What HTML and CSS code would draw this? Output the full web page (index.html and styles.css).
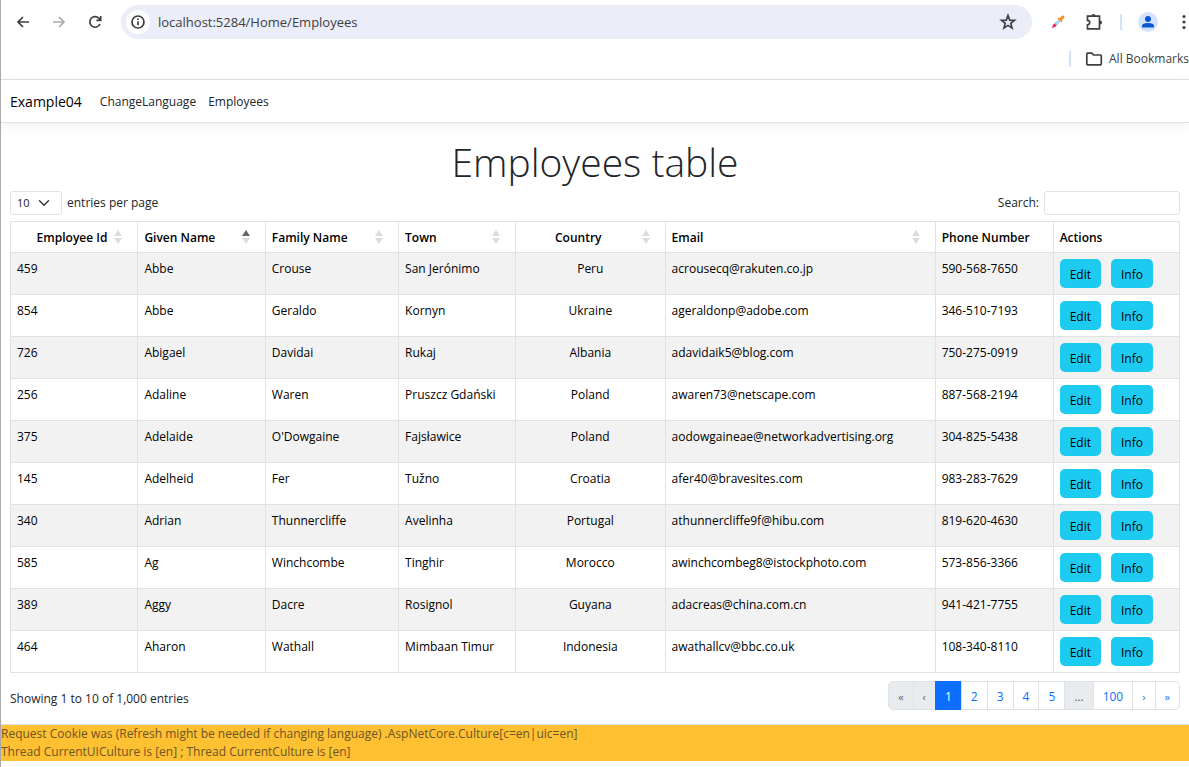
FILE: index.html
```html
<!DOCTYPE html>
<html lang="en">
  <head>
    <meta charset="UTF-8" />
    <meta name="viewport" content="width=device-width, initial-scale=1.0" />
    <title>Employees - Example04</title>
    <link rel="stylesheet" href="styles.css">
  </head>
  <body>
    <div class="browser">
      <div class="toolbar">
        <button class="icon-btn" aria-label="Back">
          <svg width="16" height="16" viewBox="0 0 16 16"><path d="M14 8H3M8 3L3 8l5 5" /></svg>
        </button>
        <button class="icon-btn faded" aria-label="Forward">
          <svg width="16" height="16" viewBox="0 0 16 16"><path d="M2 8h11M8 3l5 5-5 5" /></svg>
        </button>
        <button class="icon-btn" aria-label="Reload">
          <svg width="16" height="16" viewBox="0 0 16 16"><path d="M13 10a5.300 5.300 0 1 1-.6-5.200L13.500 6M13.700 2v4.300H9.400" /></svg>
        </button>
        <div class="address">
          <span class="site-info">
            <svg width="16" height="16" viewBox="0 0 16 16"><circle cx="8" cy="8" r="6" /><path d="M8 7.300v4M8 4.500v1.600" /></svg>
          </span>
          <input type="text" class="url" aria-label="Address" value="localhost:5284/Home/Employees" />
          <button class="icon-btn" aria-label="Bookmark this page">
            <svg width="18" height="18" viewBox="0 0 18 18"><path d="M9 2.500l1.700 4.600 4.900.2-3.800 3.100 1.300 4.700L9 12.400l-4.100 2.700 1.300-4.700-3.800-3.100 4.900-.2z" /></svg>
          </button>
        </div>
        <div class="extensions">
          <button class="icon-btn" aria-label="Color picker">
            <svg class="picker" width="16" height="16" viewBox="0 0 16 16">
              <path class="picker-tip" d="M2 14l1-3 3-3 2 2-3 3z" />
              <path class="picker-tube" d="M4.500 9.500l4-4 2 2-4 4z" />
              <path class="picker-bulb" d="M7.500 4.500l1-1 1 .8 2.500-2.500q1.500-.8 2.200.2.600 1-.2 2l-2.400 2.500.8 1-1 1z" />
            </svg>
          </button>
          <button class="icon-btn" aria-label="Extensions">
            <svg width="18" height="18" viewBox="0 0 18 18"><path d="M2.500 3.200h12v12.600h-12v-4a2.200 2.200 0 0 0 0-4.400z" /><path class="solid" d="M6.500 3a2 2 0 0 1 4 0zM15 7.500a2 2 0 0 1 0 4z" /></svg>
          </button>
          <span class="divider"></span>
          <button class="icon-btn" aria-label="Profile">
            <svg class="profile" width="20" height="20" viewBox="0 0 20 20">
              <circle class="profile-bg" cx="10" cy="10" r="10" />
              <circle cx="10" cy="7" r="3" />
              <path d="M4 15.500v-1.500q0-3 6-3t6 3v1.500z" />
            </svg>
          </button>
          <button class="icon-btn menu-btn" aria-label="Menu">
            <svg class="dots" width="4" height="16" viewBox="0 0 4 16"><circle cx="2" cy="2.500" r="1.600" /><circle cx="2" cy="8" r="1.600" /><circle cx="2" cy="13.500" r="1.600" /></svg>
          </button>
        </div>
      </div>
      <div class="bookmarks">
        <span class="divider"></span>
        <button class="all-bookmarks">
          <svg width="18" height="16" viewBox="0 0 18 16"><path d="M1.800 13V3q0-.8.800-.8h4.200l1.700 1.800h7q.8 0 .8.800V13q0 .8-.8.800H2.600q-.8 0-.8-.8z" /></svg>
          All Bookmarks
        </button>
      </div>
    </div>

    <nav class="navbar">
      <a class="brand" href="#">Example04</a>
      <a href="#">ChangeLanguage</a>
      <a href="#">Employees</a>
    </nav>

    <main class="container">
      <h1>Employees table</h1>

      <div class="controls">
        <div class="length">
          <select id="entries">
            <option>10</option>
            <option>25</option>
            <option>50</option>
            <option>100</option>
          </select>
          <label for="entries">entries per page</label>
        </div>
        <div class="search">
          <label for="search">Search:</label>
          <input type="search" id="search" />
        </div>
      </div>

      <table>
        <colgroup>
          <col class="col-id" />
          <col class="col-given" />
          <col class="col-family" />
          <col class="col-town" />
          <col class="col-country" />
          <col class="col-email" />
          <col class="col-phone" />
          <col class="col-actions" />
        </colgroup>
        <thead>
          <tr>
            <th class="sortable right">Employee Id</th>
            <th class="sortable asc">Given Name</th>
            <th class="sortable">Family Name</th>
            <th class="sortable">Town</th>
            <th class="sortable center">Country</th>
            <th class="sortable">Email</th>
            <th>Phone Number</th>
            <th>Actions</th>
          </tr>
        </thead>
        <tbody>
          <tr>
            <td>459</td><td>Abbe</td><td>Crouse</td><td>San Jerónimo</td><td class="center">Peru</td>
            <td>acrousecq@rakuten.co.jp</td><td>590-568-7650</td>
            <td><div class="actions"><button>Edit</button><button>Info</button></div></td>
          </tr>
          <tr>
            <td>854</td><td>Abbe</td><td>Geraldo</td><td>Kornyn</td><td class="center">Ukraine</td>
            <td>ageraldonp@adobe.com</td><td>346-510-7193</td>
            <td><div class="actions"><button>Edit</button><button>Info</button></div></td>
          </tr>
          <tr>
            <td>726</td><td>Abigael</td><td>Davidai</td><td>Rukaj</td><td class="center">Albania</td>
            <td>adavidaik5@blog.com</td><td>750-275-0919</td>
            <td><div class="actions"><button>Edit</button><button>Info</button></div></td>
          </tr>
          <tr>
            <td>256</td><td>Adaline</td><td>Waren</td><td>Pruszcz Gdański</td><td class="center">Poland</td>
            <td>awaren73@netscape.com</td><td>887-568-2194</td>
            <td><div class="actions"><button>Edit</button><button>Info</button></div></td>
          </tr>
          <tr>
            <td>375</td><td>Adelaide</td><td>O'Dowgaine</td><td>Fajsławice</td><td class="center">Poland</td>
            <td>aodowgaineae@networkadvertising.org</td><td>304-825-5438</td>
            <td><div class="actions"><button>Edit</button><button>Info</button></div></td>
          </tr>
          <tr>
            <td>145</td><td>Adelheid</td><td>Fer</td><td>Tužno</td><td class="center">Croatia</td>
            <td>afer40@bravesites.com</td><td>983-283-7629</td>
            <td><div class="actions"><button>Edit</button><button>Info</button></div></td>
          </tr>
          <tr>
            <td>340</td><td>Adrian</td><td>Thunnercliffe</td><td>Avelinha</td><td class="center">Portugal</td>
            <td>athunnercliffe9f@hibu.com</td><td>819-620-4630</td>
            <td><div class="actions"><button>Edit</button><button>Info</button></div></td>
          </tr>
          <tr>
            <td>585</td><td>Ag</td><td>Winchcombe</td><td>Tinghir</td><td class="center">Morocco</td>
            <td>awinchcombeg8@istockphoto.com</td><td>573-856-3366</td>
            <td><div class="actions"><button>Edit</button><button>Info</button></div></td>
          </tr>
          <tr>
            <td>389</td><td>Aggy</td><td>Dacre</td><td>Rosignol</td><td class="center">Guyana</td>
            <td>adacreas@china.com.cn</td><td>941-421-7755</td>
            <td><div class="actions"><button>Edit</button><button>Info</button></div></td>
          </tr>
          <tr>
            <td>464</td><td>Aharon</td><td>Wathall</td><td>Mimbaan Timur</td><td class="center">Indonesia</td>
            <td>awathallcv@bbc.co.uk</td><td>108-340-8110</td>
            <td><div class="actions"><button>Edit</button><button>Info</button></div></td>
          </tr>
        </tbody>
      </table>

      <div class="table-footer">
        <p>Showing 1 to 10 of 1,000 entries</p>
        <div class="pagination">
          <button class="arrow" disabled>«</button>
          <button class="arrow" disabled>‹</button>
          <button class="active">1</button>
          <button>2</button>
          <button>3</button>
          <button>4</button>
          <button>5</button>
          <button disabled>…</button>
          <button>100</button>
          <button class="arrow">›</button>
          <button class="arrow">»</button>
        </div>
      </div>
    </main>

    <footer>
      <p>Request Cookie was (Refresh might be needed if changing language) .AspNetCore.Culture[c=en|uic=en]</p>
      <p>Thread CurrentUICulture is [en] ; Thread CurrentCulture is [en]</p>
    </footer>
  </body>
</html>
```
FILE: styles.css
```css
* {
  margin: 0;
  padding: 0;
  box-sizing: border-box;
}
body {
  font-family: "Open Sans", "Noto Sans", sans-serif;
  font-size: 12px;
  line-height: 18px;
  color: #212529;
  background: white;
  border-left: 1px solid #a9a9ac;
  min-height: 100vh;
  overflow-x: hidden;
}
button,
input,
select {
  font: inherit;
  color: inherit;
}
button {
  cursor: pointer;
}
a {
  color: inherit;
  text-decoration: none;
}

/* browser bar */
.browser {
  border-bottom: 1px solid #dfe0e1;
}
.toolbar {
  display: flex;
  align-items: center;
  height: 44px;
  padding-left: 12px;
}
.icon-btn {
  display: flex;
  align-items: center;
  justify-content: center;
  width: 20px;
  height: 20px;
  margin-right: 16px;
  border: none;
  background: none;
}
svg {
  fill: none;
  stroke: #3c4043;
  stroke-width: 1.7;
  flex-shrink: 0;
}
.solid {
  fill: #3c4043;
  stroke: none;
}
.faded svg {
  stroke: #a8aaac;
}
.address {
  display: flex;
  align-items: center;
  flex: 1;
  height: 34px;
  padding-left: 5px;
  border-radius: 17px;
  background: #ebeef8;
}
.address .icon-btn {
  margin-right: 14px;
}
.site-info {
  display: flex;
  align-items: center;
  justify-content: center;
  width: 24px;
  height: 24px;
  border-radius: 50%;
  background: white;
}
.url {
  flex: 1;
  padding: 0 8px;
  border: none;
  outline: none;
  background: none;
  font-size: 13px;
  color: #3c4043;
}
.extensions {
  display: flex;
  align-items: center;
  padding-left: 16px;
}
.divider {
  width: 2px;
  height: 16px;
  background: #d3e3fd;
}
.extensions .divider {
  margin-right: 16px;
}
.picker {
  stroke: none;
}
.picker-tip {
  fill: #e91e63;
}
.picker-tube {
  fill: #a9d3fb;
}
.picker-bulb {
  fill: #fb8c1e;
}
.profile {
  fill: #0b57d0;
  stroke: none;
}
.profile-bg {
  fill: #d3e3fd;
}
.dots {
  fill: #3c4043;
  stroke: none;
}
.extensions .menu-btn {
  width: 10px;
  margin: 0 0 0 5px;
}
.bookmarks {
  display: flex;
  align-items: center;
  justify-content: flex-end;
  height: 35px;
  padding-bottom: 5px;
}
.all-bookmarks {
  display: flex;
  align-items: center;
  gap: 6px;
  margin-left: 14px;
  border: none;
  background: none;
  color: #3c4043;
  white-space: nowrap;
}

/* page */
.navbar {
  display: flex;
  align-items: center;
  gap: 12px;
  height: 43px;
  padding: 2px 9px 0;
  border-bottom: 1px solid #dee2e6;
  box-shadow: 0 4px 12px rgba(0, 0, 0, 0.05);
}
.brand {
  margin-right: 6px;
  font-size: 14px;
  color: black;
}
.container {
  padding: 15px 9px 14px;
}
h1 {
  font-size: 39px;
  font-weight: 300;
  line-height: 48px;
  text-align: center;
}
.controls {
  display: flex;
  justify-content: space-between;
  padding: 5px 0 6px;
}
.length,
.search {
  display: flex;
  align-items: center;
  gap: 5px;
}
select,
.search input {
  height: 24px;
  border: 1px solid #dee2e6;
  border-radius: 3px;
  background: white;
}
select {
  width: 52px;
  padding: 0 6px;
  appearance: none;
  font-size: 11px;
  background: white url("data:image/svg+xml,%3Csvg xmlns='http://www.w3.org/2000/svg' viewBox='0 0 16 16'%3E%3Cpath fill='none' stroke='%23343a40' stroke-linecap='round' stroke-width='2' d='m2 5 6 6 6-6'/%3E%3C/svg%3E") no-repeat right 11px center / 12px;
}
.search input {
  width: 136px;
  padding: 0 6px;
}

table {
  width: 100%;
  table-layout: fixed;
  border-collapse: collapse;
  color: black;
}
.col-id,
.col-given {
  width: 10.9%;
}
.col-family {
  width: 11.4%;
}
.col-town {
  width: 10%;
}
.col-country {
  width: 12.8%;
}
.col-email {
  width: 23.1%;
}
.col-phone {
  width: 10.1%;
}
th,
td {
  padding: 7px 6px 5px;
  border: 1px solid #dee2e6;
  text-align: left;
  vertical-align: top;
}
td:last-child {
  padding: 6px;
}
th {
  font-weight: 600;
}
tbody tr:nth-child(odd) {
  background: #f2f2f2;
}
.center {
  text-align: center;
}
.right {
  text-align: right;
}
.sortable {
  position: relative;
  padding-right: 30px;
}
.sortable::before,
.sortable::after {
  content: "";
  position: absolute;
  right: 15px;
  border: 4px solid transparent;
}
.sortable::before {
  top: 8px;
  border-top: none;
  border-bottom: 6px solid #dcdcdc;
}
.sortable::after {
  top: 16px;
  border-bottom: none;
  border-top: 6px solid #dcdcdc;
}
.sortable.asc::before {
  border-bottom-color: #666;
}
.actions {
  display: flex;
  gap: 10px;
}
.actions button {
  height: 29px;
  padding: 2px 10px 0;
  border: none;
  border-radius: 5px;
  background: #1ecbf0;
  color: black;
}

.table-footer {
  display: flex;
  align-items: center;
  justify-content: space-between;
  padding-top: 8px;
}
.table-footer p {
  padding-top: 6px;
}
.pagination {
  display: flex;
}
.pagination button {
  height: 29px;
  padding: 2px 9px 0;
  margin-left: -1px;
  border: 1px solid #dee2e6;
  background: white;
  color: #0d6efd;
}
.pagination .arrow {
  font-size: 11px;
}
.pagination button:first-child {
  border-radius: 5px 0 0 5px;
}
.pagination button:last-child {
  border-radius: 0 5px 5px 0;
}
.pagination button:disabled {
  background: #e9ecef;
  color: #5c6268;
}
.pagination .active {
  border-color: #0d6efd;
  background: #0d6efd;
  color: white;
}

footer {
  border-top: 1px solid #dee2e6;
  background: #ffc031;
  color: #6b5527;
}

@media (max-width: 900px) {
  .container {
    overflow-x: auto;
  }
  table {
    min-width: 1000px;
  }
}
```
